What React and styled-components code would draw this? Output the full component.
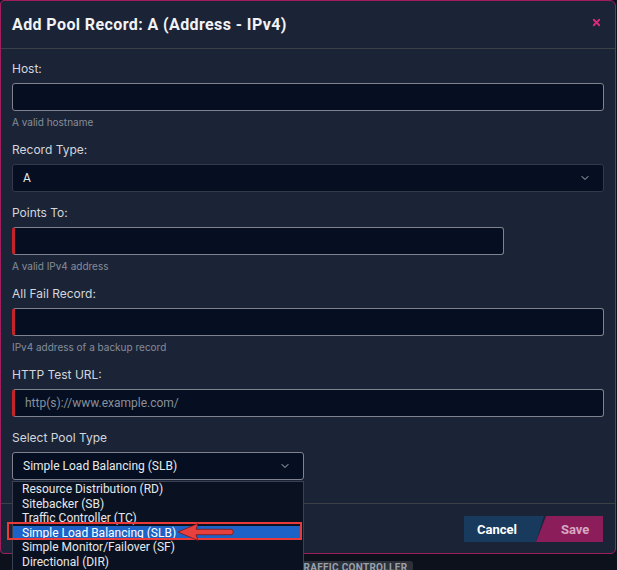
import React from "react";
import styled, { createGlobalStyle } from "styled-components";
import { ChevronDown, X } from "lucide-react";

const GlobalStyle = createGlobalStyle`
  html, body { margin: 0; padding: 0; }
  body {
    background: #0c111b;
    font-family: Inter, "Noto Sans", sans-serif;
    color: #d5d8de;
  }
`;

const Page = styled.div`
  position: relative;
  width: 617px;
  height: 570px;
  overflow: hidden;
  background: #0c111b;
`;

const Modal = styled.div`
  position: relative;
  z-index: 1;
  box-sizing: border-box;
  width: 616px;
  background: #1b2437;
  border: 1px solid #a11d5e;
  border-radius: 4px 6px 5px 4px;
`;

const Header = styled.div`
  height: 47px;
  border-bottom: 1px solid #3b4049;
  display: flex;
  align-items: center;
  justify-content: space-between;
  padding: 0 13px 0 11px;
`;

const Title = styled.h1`
  margin: 0;
  font-family: Roboto, "Liberation Sans", sans-serif;
  font-weight: 700;
  font-size: 16px;
  letter-spacing: 0.4px;
  color: #f2f3f5;
`;

const Close = styled.button`
  background: none;
  border: none;
  padding: 0;
  display: flex;
  color: #e2267c;
  margin-top: -4px;
`;

const Body = styled.div`
  position: relative;
  display: flex;
  flex-direction: column;
  gap: 13px;
  padding: 12px 11px 23px 11px;
`;

const Field = styled.div`
  position: relative;
  display: flex;
  flex-direction: column;
  width: ${(p) => p.$width || "100%"};
`;

const Label = styled.label`
  font-size: 12px;
  line-height: 16px;
  margin-bottom: 6px;
  color: #d3d6dc;
`;

const Input = styled.div`
  box-sizing: border-box;
  height: 28px;
  background: #050f21;
  border: 1px solid ${(p) => (p.$dim ? "#323a49" : "#7e838d")};
  border-left: ${(p) => (p.$invalid ? "3px solid #c3242c" : undefined)};
  border-radius: 3px;
  display: flex;
  align-items: center;
  justify-content: space-between;
  padding: 0 12px 0 10px;
  font-size: 12px;
  color: ${(p) => (p.$placeholder ? "#8a909b" : "#e8eaee")};
`;

const Value = styled.span`
  font-family: Roboto, Inter, sans-serif;
  font-size: 12px;
`;

const Helper = styled.div`
  font-size: 10px;
  line-height: 14px;
  margin-top: 4px;
  color: #868c97;
`;

const Footer = styled.div`
  border-top: 1px solid #3b4049;
  display: flex;
  justify-content: flex-end;
  padding: 12px 12px 11px 0;
`;

const ButtonGroup = styled.div`
  display: flex;
  height: 26px;
`;

const SlantButton = styled.button`
  height: 26px;
  border: none;
  font-family: Roboto, "Liberation Sans", sans-serif;
  font-weight: 700;
  font-size: 13px;
  cursor: pointer;
  background: ${(p) => p.$bg};
  color: ${(p) => p.$color};
  width: ${(p) => p.$w}px;
  margin-left: ${(p) => p.$ml || 0}px;
  padding: ${(p) => p.$pad};
  clip-path: ${(p) => p.$clip};
  text-align: left;
`;

const Dropdown = styled.ul`
  position: absolute;
  top: 100%;
  left: 0;
  width: 292px;
  box-sizing: border-box;
  margin: 1px 0 0;
  padding: 0;
  list-style: none;
  background: #0a1221;
  border: 1px solid #3a4150;
  border-bottom: none;
  height: 120px;
  z-index: 2;
`;

const Option = styled.li`
  height: 14.6px;
  line-height: 14.6px;
  padding-left: 9px;
  margin: 0 2px 0 0;
  font-family: Roboto, Inter, sans-serif;
  font-size: 12px;
  color: ${(p) => (p.$active ? "#ffffff" : "#e6e8ec")};
  background: ${(p) => (p.$active ? "#1d63c7" : "transparent")};
  white-space: nowrap;
`;

const Annotation = styled.div`
  position: absolute;
  left: 7px;
  top: 522px;
  width: 295px;
  height: 18px;
  box-sizing: border-box;
  border: 2px solid #e83a3a;
  z-index: 3;
  pointer-events: none;
`;

const Arrow = styled.svg`
  position: absolute;
  left: 176px;
  top: 521px;
  z-index: 4;
`;

const BottomStrip = styled.div`
  display: flex;
  padding: 7px 0 0 291px;
`;

const Tag = styled.div`
  background: #2b303a;
  color: #9aa0aa;
  font-family: Roboto, sans-serif;
  font-weight: 700;
  font-size: 10px;
  line-height: 12px;
  padding: 1px 6px 2px;
  border-radius: 3px;
  letter-spacing: 0.3px;
  white-space: nowrap;
`;

const options = [
  "Resource Distribution (RD)",
  "Sitebacker (SB)",
  "Traffic Controller (TC)",
  "Simple Load Balancing (SLB)",
  "Simple Monitor/Failover (SF)",
  "Directional (DIR)",
];

export default function App() {
  return (
    <Page>
      <GlobalStyle />
      <Modal>
        <Header>
          <Title>Add Pool Record: A (Address - IPv4)</Title>
          <Close aria-label="close">
            <X size={11} strokeWidth={4} />
          </Close>
        </Header>
        <Body>
          <Field>
            <Label>Host:</Label>
            <Input />
            <Helper>A valid hostname</Helper>
          </Field>
          <Field>
            <Label>Record Type:</Label>
            <Input $dim>
              <Value>A</Value>
              <ChevronDown size={12} color="#b8bcc4" strokeWidth={2} />
            </Input>
          </Field>
          <Field $width="492px">
            <Label>Points To:</Label>
            <Input $invalid />
            <Helper>A valid IPv4 address</Helper>
          </Field>
          <Field>
            <Label>All Fail Record:</Label>
            <Input $invalid />
            <Helper>IPv4 address of a backup record</Helper>
          </Field>
          <Field>
            <Label>HTTP Test URL:</Label>
            <Input $invalid $placeholder>
              <Value>http(s)://www.example.com/</Value>
            </Input>
          </Field>
          <Field $width="292px">
            <Label>Select Pool Type</Label>
            <Input>
              <Value>Simple Load Balancing (SLB)</Value>
              <ChevronDown size={12} color="#b8bcc4" strokeWidth={2} />
            </Input>
            <Dropdown>
              {options.map((o) => (
                <Option key={o} $active={o === "Simple Load Balancing (SLB)"}>
                  {o}
                </Option>
              ))}
            </Dropdown>
          </Field>
        </Body>
        <Footer>
          <ButtonGroup>
            <SlantButton
              $bg="#183a5d"
              $color="#ffffff"
              $w={80}
              $pad="0 0 0 13px"
              $clip="polygon(0 0, 100% 0, 90% 100%, 0 100%)"
            >
              Cancel
            </SlantButton>
            <SlantButton
              $bg="#8c1d5b"
              $color="#d8a9c3"
              $w={67}
              $ml={-8}
              $pad="0 0 0 25px"
              $clip="polygon(15% 0, 100% 0, 100% 100%, 0 100%)"
            >
              Save
            </SlantButton>
          </ButtonGroup>
        </Footer>
      </Modal>
      <BottomStrip>
        <Tag>TRAFFIC CONTROLLER</Tag>
      </BottomStrip>
      <Annotation />
      <Arrow width="62" height="22" viewBox="0 0 62 22">
        <path
          d="M2 11 L22 2.5 L20 8.3 L56 8.3 Q59 11 56 13.7 L20 13.7 L22 19.5 Z"
          fill="#e8403c"
          stroke="#7a1818"
          strokeWidth="0.8"
          strokeLinejoin="round"
        />
      </Arrow>
    </Page>
  );
}
